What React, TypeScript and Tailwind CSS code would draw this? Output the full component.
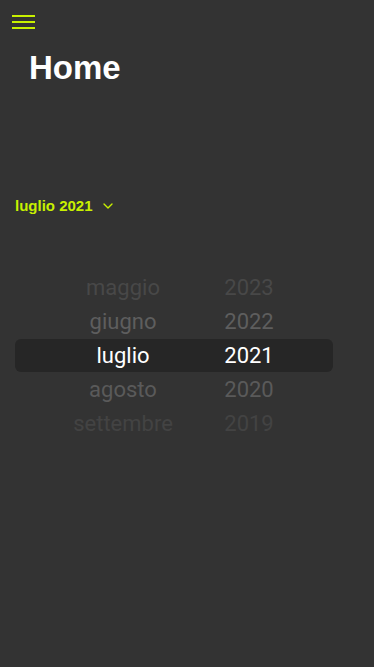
import { ChevronDown } from 'lucide-react';

const rows = [
  { month: 'maggio', year: '2023', color: 'text-[#484848]' },
  { month: 'giugno', year: '2022', color: 'text-[#5e5e5e]' },
  { month: 'luglio', year: '2021', color: 'text-white' },
  { month: 'agosto', year: '2020', color: 'text-[#5a5a5a]' },
  { month: 'settembre', year: '2019', color: 'text-[#434343]' },
];

export default function App() {
  return (
    <div className="min-h-[667px] bg-[#333333] font-['Roboto',sans-serif]">
      {/* Header */}
      <div className="px-3 pt-[15px]">
        <button className="flex flex-col gap-[4px] w-[23px]">
          <span className="block h-[2px] w-full bg-[#c8f000]" />
          <span className="block h-[2px] w-full bg-[#c8f000]" />
          <span className="block h-[2px] w-full bg-[#c8f000]" />
        </button>
      </div>
      <h1 className="pl-[29px] mt-[19px] font-['Liberation_Sans',sans-serif] text-[33px] leading-[40px] font-bold text-white">
        Home
      </h1>

      {/* Month selector */}
      <button className="mt-[108px] ml-[15px] flex items-center gap-[7px] text-[#c8f000]">
        <span className="font-['Liberation_Sans',sans-serif] text-[15px] leading-[20px] font-bold">luglio 2021</span>
        <ChevronDown className="h-4 w-4" strokeWidth={2} />
      </button>

      {/* Picker */}
      <div className="mt-[54px] px-[15px]">
        <div className="relative w-[318px]">
          <div className="absolute left-0 right-0 top-[69px] h-[33px] rounded-[6px] bg-[#262626]" />
          <div className="relative flex flex-col">
            {rows.map(r => (
              <div key={r.month} className={`flex h-[34px] items-center text-[22px] ${r.color}`}>
                <span className="w-[216px] text-center">{r.month}</span>
                <span className="ml-[-20px] w-[76px] text-center">{r.year}</span>
              </div>
            ))}
          </div>
        </div>
      </div>
    </div>
  );
}
